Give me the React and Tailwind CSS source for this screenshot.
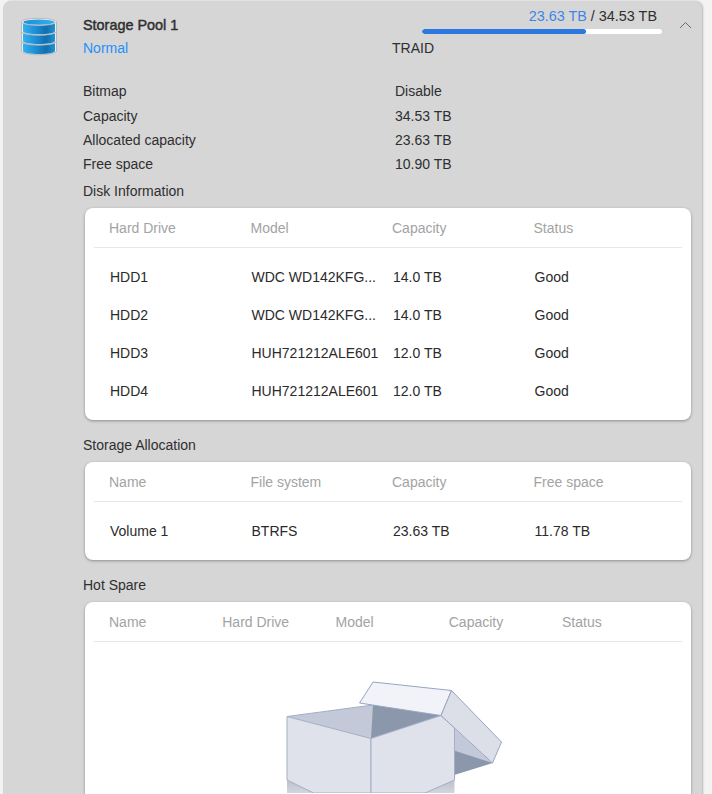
import React from 'react'

const font = { fontFamily: '"Liberation Sans", Arial, sans-serif' }

const infoRows = [
  ['Bitmap', 'Disable'],
  ['Capacity', '34.53 TB'],
  ['Allocated capacity', '23.63 TB'],
  ['Free space', '10.90 TB'],
]

const disks = [
  ['HDD1', 'WDC WD142KFG...', '14.0 TB', 'Good'],
  ['HDD2', 'WDC WD142KFG...', '14.0 TB', 'Good'],
  ['HDD3', 'HUH721212ALE601', '12.0 TB', 'Good'],
  ['HDD4', 'HUH721212ALE601', '12.0 TB', 'Good'],
]

function PoolIcon() {
  return (
    <svg width="40" height="40" viewBox="0 0 40 40" className="block">
      <defs>
        <linearGradient id="side" x1="0" x2="1" y1="0" y2="0">
          <stop offset="0" stopColor="#35b0ee" />
          <stop offset="0.4" stopColor="#1c8ed6" />
          <stop offset="0.72" stopColor="#106fae" />
          <stop offset="1" stopColor="#2292d2" />
        </linearGradient>
        <linearGradient id="top" x1="0" x2="1" y1="0" y2="0">
          <stop offset="0" stopColor="#1b8fd6" />
          <stop offset="1" stopColor="#35b0ee" />
        </linearGradient>
      </defs>
      {[24.500, 14.500, 4.800].map((y) => (
        <g key={y}>
          <path d={`M1.500 ${y}v9.500c0 2.100 7.800 3.700 17.500 3.700s17.500-1.600 17.500-3.700v-9.500z`} fill="#eef1f4" stroke="#b4b9be" />
          <path d={`M3 ${y + 1}v8.400c0 1.700 7.200 3.100 16 3.100s16-1.400 16-3.100v-8.400z`} fill="url(#side)" />
          <ellipse cx="19" cy={y} rx="17.500" ry="3.600" fill="#eef1f4" stroke="#b4b9be" />
          <ellipse cx="19" cy={y + 0.300} rx="15.500" ry="2.600" fill="url(#top)" />
        </g>
      ))}
    </svg>
  )
}

function BoxPicture() {
  return (
    <svg width="260" height="130" viewBox="0 0 260 130" className="block">
      <defs>
        <linearGradient id="fade" x1="0" x2="0" y1="0" y2="1">
          <stop offset="0" stopColor="#bcc1cd" />
          <stop offset="1" stopColor="#d2d5dd" />
        </linearGradient>
      </defs>
      <path d="M27.500 53.500L113 42L181 52.500L111 75.500z" fill="#c3c9d9" />
      <path d="M113 42L181 52.500L111 75.500z" fill="#8b97aa" />
      <path d="M194 65L232.500 100L194 112z" fill="#c3c9d9" />
      <path d="M194 87.500L232.500 100L194 112z" fill="#8b97aa" />
      <path d="M27 117H194.500V130H27z" fill="url(#fade)" />
      <path d="M27 53.500L111 75.500V130H53.500L27 117z" fill="#e0e2eb" stroke="#a3aec6" />
      <path d="M111 75.500L181 52.500L194.500 65V117L165 130H111z" fill="#e0e2eb" stroke="#a3aec6" />
      <path d="M27 53.500L113 42" stroke="#a3aec6" fill="none" />
      <path d="M113 19L191.500 27.500L181 52.500L99.500 40z" fill="#f1f3f8" stroke="#98a5c0" />
      <path d="M191.500 27.500L241.500 79L232.500 100L181 52.500z" fill="#dcdfe8" stroke="#98a5c0" />
    </svg>
  )
}

function Panel({ className = '', children }) {
  return (
    <div className={`mt-[9px] ml-[2px] w-[606px] rounded-lg bg-white pl-[9px] pr-[9px] shadow-[0_1px_3px_rgba(0,0,0,0.35)] ${className}`}>
      {children}
    </div>
  )
}

function HeadRow({ cols, grid }) {
  return (
    <div className={`grid h-[40px] items-center border-b border-[#e6e6e6] pl-[15px] pt-px text-[14px] text-[#a3a3a3] ${grid}`}>
      {cols.map((c) => <div key={c}>{c}</div>)}
    </div>
  )
}

function BodyRow({ cells }) {
  return (
    <div className="grid h-[38px] grid-cols-[141.500px_141.500px_141.500px_141.500px] items-center pl-[16px] text-[14px] text-[#2b2b2b]">
      {cells.map((c) => <div key={c} className="whitespace-nowrap">{c}</div>)}
    </div>
  )
}

export default function App() {
  return (
    <div className="h-[794px] w-[712px] overflow-hidden bg-[#f3f3f3] pl-[3px] pt-[1px]" style={font}>
      <div className="relative h-[900px] w-[699px] rounded-lg bg-[#d6d6d6] pl-[80px] pt-[16px] text-[14px] text-[#2f2f2f] shadow-[1px_0_2px_rgba(0,0,0,0.25)]">
        <div className="absolute left-[17px] top-[16px]"><PoolIcon /></div>

        <div className="flex h-[16px] items-center text-[14.400px] leading-none text-[#2f2f2f] [-webkit-text-stroke:0.45px_#2f2f2f]">Storage Pool 1</div>
        <div className="mt-[7px] flex h-[16px] items-center">
          <span className="w-[309px] text-[#2490f8]">Normal</span>
          <span>TRAID</span>
        </div>

        <div className="absolute left-[419px] top-[7px] w-[240px]">
          <div className="h-[16px] pr-[5px] text-right text-[14.400px] leading-[16px]">
            <span className="text-[#3d85e8]">23.63 TB</span> / 34.53 TB
          </div>
          <div className="mt-[5px] h-[5px] overflow-hidden rounded-full bg-white">
            <div className="h-full w-[68.400%] rounded-full bg-[#2c78e0]" />
          </div>
        </div>
        <svg width="14" height="8" viewBox="0 0 14 8" className="absolute left-[676px] top-[20px]">
          <path d="M1 7L6.500 1.500L12 7" fill="none" stroke="#6a6a6a" strokeWidth="1" />
        </svg>

        <div className="mt-[23px]">
          {infoRows.map(([k, v]) => (
            <div key={k} className="flex h-[24px] items-center first:mb-px">
              <span className="w-[312px]">{k}</span>
              <span>{v}</span>
            </div>
          ))}
        </div>

        <div className="mt-[7px] h-[16px] leading-[16px]">Disk Information</div>
        <Panel className="pb-[10px]">
          <HeadRow cols={['Hard Drive', 'Model', 'Capacity', 'Status']} grid="grid-cols-[141.500px_141.500px_141.500px_141.500px]" />
          <div className="pt-[10px]">
            {disks.map((d) => <BodyRow key={d[0]} cells={d} />)}
          </div>
        </Panel>

        <div className="mt-[17px] h-[16px] leading-[16px]">Storage Allocation</div>
        <Panel className="h-[98px]">
          <HeadRow cols={['Name', 'File system', 'Capacity', 'Free space']} grid="grid-cols-[141.500px_141.500px_141.500px_141.500px]" />
          <div className="pt-[10px]">
            <BodyRow cells={['Volume 1', 'BTRFS', '23.63 TB', '11.78 TB']} />
          </div>
        </Panel>

        <div className="mt-[17px] h-[16px] leading-[16px]">Hot Spare</div>
        <Panel className="h-[300px]">
          <HeadRow cols={['Name', 'Hard Drive', 'Model', 'Capacity', 'Status']} grid="grid-cols-[113.250px_113.250px_113.250px_113.250px_113.250px]" />
          <div className="ml-[166px] mt-[21px]"><BoxPicture /></div>
        </Panel>
      </div>
    </div>
  )
}
